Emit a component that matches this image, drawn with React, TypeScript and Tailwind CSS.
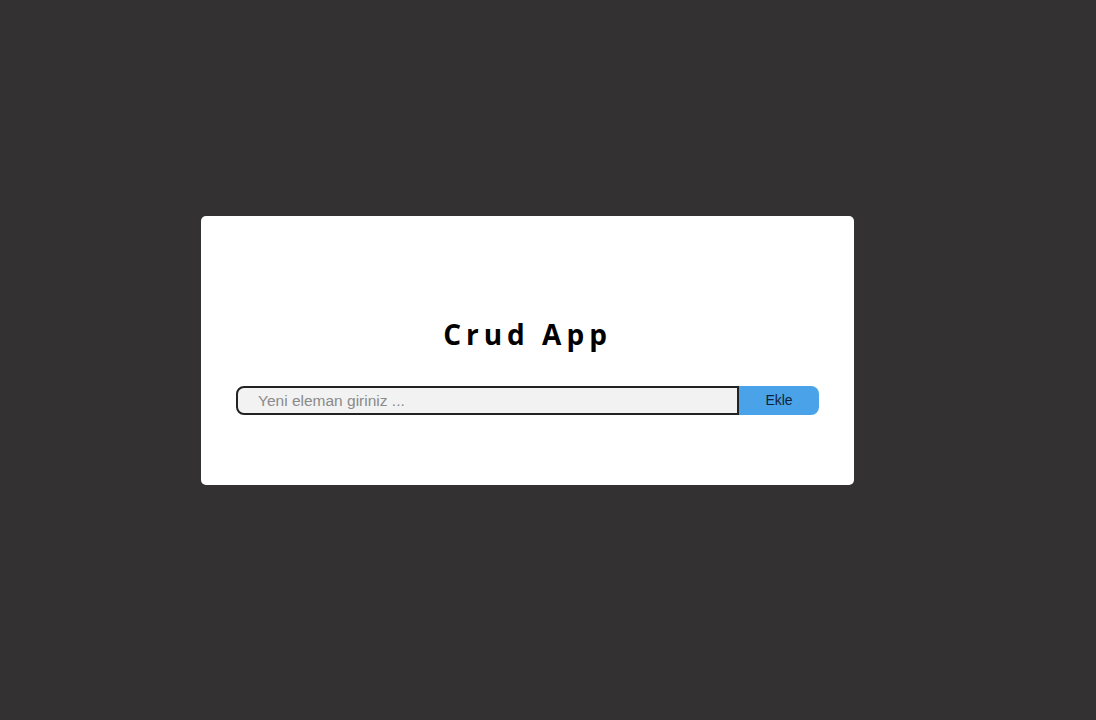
import { useState } from 'react';

export default function App() {
  const [value, setValue] = useState('');

  return (
    <div className="min-h-screen w-full bg-[#333132] pt-[216px] pl-[201px]">
      <div className="flex h-[269px] w-[653px] flex-col rounded-[5px] bg-white px-[35px] pt-[97px]">
        <h1 className="text-center font-['Open_Sans',sans-serif] text-[28px] leading-[42px] font-bold tracking-[5px] text-black">
          Crud App
        </h1>
        <div className="mt-[31px] flex h-[29px]">
          <input
            value={value}
            onChange={(e) => setValue(e.target.value)}
            placeholder="Yeni eleman giriniz ..."
            className="h-full flex-1 rounded-l-[8px] border-2 border-[#222] bg-[#f2f2f2] pl-[20px] font-['Liberation_Sans',Arial,sans-serif] text-[15.5px] text-black outline-none placeholder:text-[#8a8a8a]"
          />
          <button className="h-full w-[80px] rounded-r-[8px] bg-[#4aa3e8] font-['Liberation_Sans',Arial,sans-serif] text-[14px] text-[#10233a]">
            Ekle
          </button>
        </div>
      </div>
    </div>
  );
}
